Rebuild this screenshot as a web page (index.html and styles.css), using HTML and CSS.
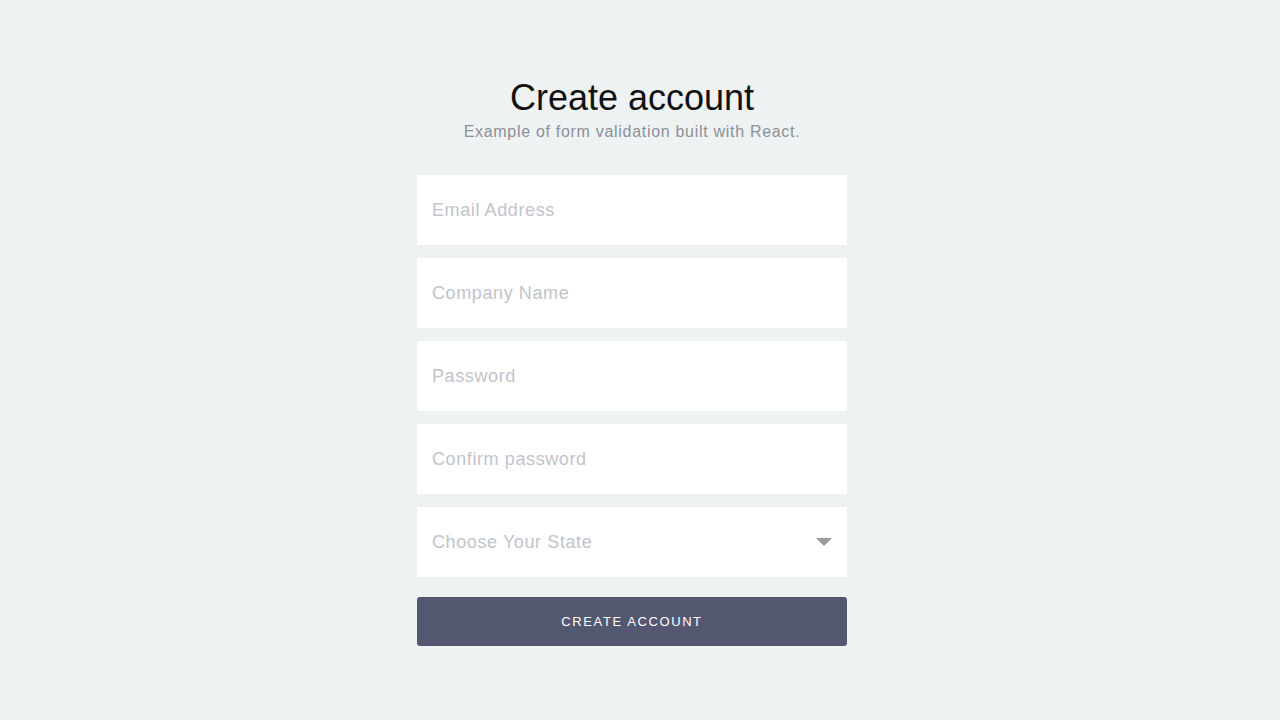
FILE: index.html
```html
<!DOCTYPE html>
<html lang="en">

<head>
    <meta charset="UTF-8">
    <meta name="viewport" content="width=device-width, initial-scale=1.0">
    <title>Create account</title>
    <link rel="stylesheet" href="styles.css">
</head>

<body>
    <div class="wrapper">
        <div class="header">
            <h1>Create account</h1>
            <p>Example of form validation built with React.</p>
        </div>

        <form class="signup-form">
            <input type="email" class="field" placeholder="Email Address">
            <input type="text" class="field" placeholder="Company Name">
            <input type="password" class="field" placeholder="Password">
            <input type="password" class="field" placeholder="Confirm password">
            <div class="select-wrap">
                <select class="field select">
                    <option value="">Choose Your State</option>
                </select>
                <span class="caret"></span>
            </div>
            <button type="button" class="submit">Create Account</button>
        </form>
    </div>
</body>

</html>
```

FILE: styles.css
```css
body {
    font-family: "Liberation Sans", Arial, sans-serif;
    margin: 0;
    padding: 0 16px 0 0;
    background-color: #eef2f3;
}

.wrapper {
    width: 430px;
    margin: 0 auto;
    padding-top: 77px;
}

.header {
    text-align: center;
    margin-bottom: 34px;
}

.header h1 {
    margin: 0;
    font-size: 36px;
    font-weight: normal;
    letter-spacing: 0;
    color: #111;
    line-height: 42px;
}

.header p {
    margin: 4px 0 0;
    font-size: 16px;
    letter-spacing: 0.7px;
    color: #8b9099;
}

.signup-form {
    display: flex;
    flex-direction: column;
    gap: 13px;
}

.field {
    box-sizing: border-box;
    width: 100%;
    height: 70px;
    padding: 0 15px;
    border: none;
    background: white;
    font-family: inherit;
    font-size: 18px;
    letter-spacing: 0.6px;
    color: #333;
    outline: none;
}

.field::placeholder {
    color: #c1c4cc;
}

.select-wrap {
    position: relative;
}

.select {
    appearance: none;
    -webkit-appearance: none;
    border-radius: 0;
    color: #c1c4cc;
}

.caret {
    position: absolute;
    right: 15px;
    top: 31px;
    width: 0;
    height: 0;
    border-left: 8px solid transparent;
    border-right: 8px solid transparent;
    border-top: 8px solid #9a9a9a;
}

.submit {
    margin-top: 7px;
    height: 49px;
    border: none;
    border-radius: 3px;
    background-color: #545770;
    color: white;
    font-family: inherit;
    font-size: 13px;
    letter-spacing: 1.6px;
    text-transform: uppercase;
    cursor: pointer;
}
```
